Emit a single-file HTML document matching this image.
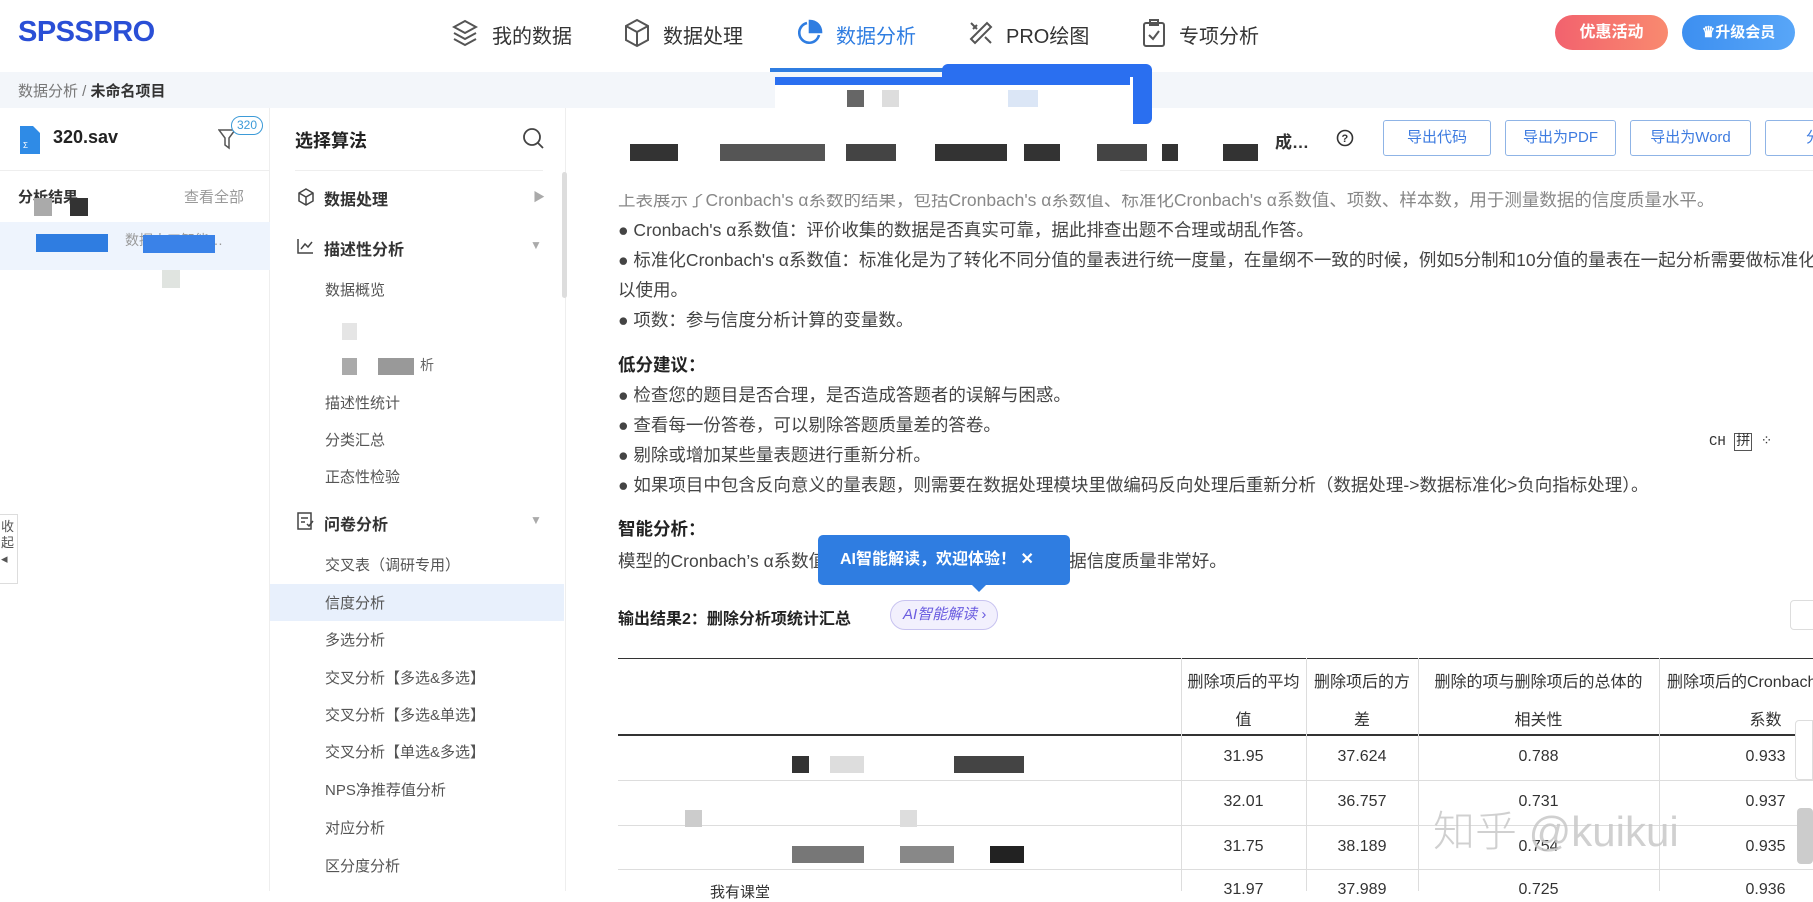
<!DOCTYPE html>
<html><head><meta charset="utf-8"><style>
*{margin:0;padding:0;box-sizing:border-box}
body{width:1813px;height:891px;overflow:hidden;background:#fff;font-family:"Liberation Sans","Noto Sans CJK SC",sans-serif;color:#333;position:relative}
.a{position:absolute;white-space:nowrap}
.nav{font-size:20px;color:#333}
.btn{position:absolute;border:1px solid #8fb4e6;border-radius:3px;color:#3d7be0;font-size:15px;text-align:center;line-height:34px;height:36px;top:120px}
.mi{position:absolute;left:325px;font-size:15px;color:#555}
.mh{position:absolute;left:324px;font-size:16px;color:#333;font-weight:bold}
.tx{position:absolute;left:618px;font-size:17.5px;color:#444;white-space:nowrap}
.blk{position:absolute;background:#333}
.td{position:absolute;font-size:16px;color:#333;text-align:center}
</style></head><body>
<div class="a" style="left:18px;top:16px;font-size:29px;font-weight:bold;color:#2a4fd6;letter-spacing:-0.5px">SPSSPRO</div>
<svg class="a" style="left:452px;top:19px" width="26" height="28" viewBox="0 0 26 28" fill="none" stroke="#555" stroke-width="2"><path d="M13 2 L24 8 L13 14 L2 8 Z"/><path d="M2 14 L13 20 L24 14"/><path d="M2 20 L13 26 L24 20"/></svg>
<div class="a nav" style="left:492px;top:20px">我的数据</div>
<svg class="a" style="left:624px;top:18px" width="26" height="30" viewBox="0 0 26 30" fill="none" stroke="#555" stroke-width="2"><path d="M13 2 L24 8 V22 L13 28 L2 22 V8 Z"/><path d="M2 8 L13 14 L24 8 M13 14 V28"/></svg>
<div class="a nav" style="left:663px;top:20px">数据处理</div>
<svg class="a" style="left:795px;top:19px" width="28" height="28" viewBox="0 0 28 28" fill="none" stroke="#2f7de1" stroke-width="2.6"><path d="M12 4 A10 10 0 1 0 24 16"/><path d="M15 2 V13 H26 A11 11 0 0 0 15 2 Z" fill="#2f7de1"/></svg>
<div class="a nav" style="left:836px;top:20px;color:#2f7de1">数据分析</div>
<svg class="a" style="left:967px;top:19px" width="28" height="28" viewBox="0 0 28 28" fill="none" stroke="#555" stroke-width="2"><path d="M4 20 L20 4 L24 8 L8 24 Z"/><path d="M4 4 L10 10 M18 18 L24 24 M6 10 L10 6"/></svg>
<div class="a nav" style="left:1006px;top:20px">PRO绘图</div>
<svg class="a" style="left:1142px;top:18px" width="24" height="30" viewBox="0 0 24 30" fill="none" stroke="#555" stroke-width="2"><rect x="2" y="5" width="20" height="23" rx="2"/><rect x="8" y="2" width="8" height="5"/><path d="M7 17 L11 21 L17 13"/></svg>
<div class="a nav" style="left:1179px;top:20px">专项分析</div>
<div class="a" style="left:1555px;top:15px;width:113px;height:35px;border-radius:18px;background:linear-gradient(90deg,#f2626e,#f98a6f);color:#fff;font-size:16px;font-weight:bold;text-align:center;line-height:35px">优惠活动</div>
<div class="a" style="left:1682px;top:15px;width:113px;height:35px;border-radius:18px;background:linear-gradient(90deg,#3d8ff0,#58a6f8);color:#fff;font-size:15px;font-weight:bold;text-align:center;line-height:35px">♛升级会员</div>
<div class="a" style="left:0;top:72px;width:1813px;height:36px;background:#f3f6fa"></div>
<div class="a" style="left:18px;top:80px;font-size:15px;color:#777">数据分析 / <b style="color:#333">未命名项目</b></div>
<div class="a" style="left:770px;top:68px;width:376px;height:4px;background:#2f7de1"></div>
<div class="a" style="left:942px;top:64px;width:210px;height:60px;background:#2a6ff0;border-radius:6px"></div>
<div class="a" style="left:775px;top:77px;width:358px;height:100px;background:#fff"></div>
<div class="a" style="left:775px;top:77px;width:355px;height:8px;background:#2a6ff0"></div>
<div class="blk" style="left:847px;top:90px;width:17px;height:17px;background:#666"></div>
<div class="a" style="left:882px;top:90px;width:17px;height:17px;background:#ddd"></div>
<div class="a" style="left:1008px;top:90px;width:30px;height:17px;background:#dbe6f6"></div>
<div class="a" style="left:0;top:108px;width:270px;height:783px;background:#fff;border-right:1px solid #eee"></div>
<svg class="a" style="left:20px;top:126px" width="20" height="28" viewBox="0 0 20 28"><path d="M0 0 H13 L20 7 V28 H0 Z" fill="#2f8be6"/><text x="3" y="22" font-size="8" fill="#fff" font-family="Liberation Sans">Σ</text></svg>
<div class="a" style="left:53px;top:127px;font-size:18px;font-weight:bold;color:#222">320.sav</div>
<svg class="a" style="left:218px;top:128px" width="18" height="22" viewBox="0 0 18 22" fill="none" stroke="#555" stroke-width="1.5"><path d="M1 2 H17 L11 10 V20 L7 17 V10 Z"/></svg>
<div class="a" style="left:231px;top:116px;width:32px;height:19px;border:1px solid #3d9bd8;border-radius:10px;font-size:12px;color:#3d9bd8;text-align:center;line-height:17px;background:#fff">320</div>
<div class="a" style="left:0;top:170px;width:270px;height:1px;background:#eee"></div>
<div class="a" style="left:18px;top:186px;font-size:15px;font-weight:bold;color:#333">分析结果</div>
<div class="a" style="left:184px;top:186px;font-size:15px;color:#999">查看全部</div>
<div class="a" style="left:34px;top:198px;width:18px;height:18px;background:#aaa"></div>
<div class="a" style="left:70px;top:198px;width:18px;height:18px;background:#333"></div>
<div class="a" style="left:0;top:222px;width:270px;height:48px;background:#eef4fd"></div>
<div class="a" style="left:36px;top:234px;width:72px;height:18px;background:#2f7de1"></div>
<div class="a" style="left:125px;top:230px;font-size:14px;color:#999">数据人工智能…</div>
<div class="a" style="left:143px;top:235px;width:72px;height:18px;background:#3a82e8"></div>
<div class="a" style="left:162px;top:270px;width:18px;height:18px;background:#e0e4e0"></div>
<div class="a" style="left:0;top:514px;width:18px;height:70px;background:#fff;border:1px solid #ddd;border-left:none;font-size:13px;color:#555;line-height:16px;padding:4px 0 0 1px;white-space:normal;width:18px">收起◂</div>
<div class="a" style="left:270px;top:108px;width:296px;height:783px;border-right:1px solid #eee"></div>
<div class="a" style="left:295px;top:127px;font-size:18px;font-weight:bold;color:#222">选择算法</div>
<svg class="a" style="left:522px;top:127px" width="22" height="22" viewBox="0 0 22 22" fill="none" stroke="#444" stroke-width="1.8"><circle cx="10" cy="10" r="8"/><path d="M16 16 L21 21"/></svg>
<div class="a" style="left:295px;top:170px;width:248px;height:1px;background:#eee"></div>
<div class="a" style="left:562px;top:172px;width:5px;height:126px;background:#ddd;border-radius:3px"></div>
<svg class="a" style="left:298px;top:188px" width="16" height="18" viewBox="0 0 16 18" fill="none" stroke="#444" stroke-width="1.5"><path d="M8 1 L15 5 V13 L8 17 L1 13 V5 Z M1 5 L8 9 L15 5 M8 9 V17"/></svg>
<div class="mh" style="top:186px">数据处理</div><div class="a" style="left:533px;top:188px;color:#aaa;font-size:12px">▶</div>
<svg class="a" style="left:297px;top:238px" width="17" height="16" viewBox="0 0 17 16" fill="none" stroke="#444" stroke-width="1.5"><path d="M1 1 V15 H16 M4 11 L8 6 L11 9 L15 4"/></svg>
<div class="mh" style="top:236px">描述性分析</div><div class="a" style="left:530px;top:238px;color:#aaa;font-size:12px">▼</div>
<div class="mi" style="top:279px">数据概览</div>
<div class="a" style="left:342px;top:323px;width:15px;height:17px;background:#e5e5e5"></div>
<div class="a" style="left:342px;top:358px;width:15px;height:17px;background:#aaa"></div>
<div class="a" style="left:378px;top:358px;width:36px;height:17px;background:#999"></div>
<div class="a" style="left:420px;top:355px;font-size:14px;color:#666">析</div>
<div class="mi" style="top:392px">描述性统计</div>
<div class="mi" style="top:429px">分类汇总</div>
<div class="mi" style="top:466px">正态性检验</div>
<svg class="a" style="left:297px;top:512px" width="17" height="18" viewBox="0 0 17 18" fill="none" stroke="#444" stroke-width="1.5"><rect x="1" y="1" width="13" height="16"/><path d="M4 6 H11 M4 10 H8 M10 12 L12 14 L16 9"/></svg>
<div class="mh" style="top:511px">问卷分析</div><div class="a" style="left:530px;top:513px;color:#aaa;font-size:12px">▼</div>
<div class="mi" style="top:554px">交叉表（调研专用）</div>
<div class="a" style="left:270px;top:584px;width:294px;height:37px;background:#e8f0fc"></div>
<div class="mi" style="top:592px">信度分析</div>
<div class="mi" style="top:629px">多选分析</div>
<div class="mi" style="top:667px">交叉分析【多选&amp;多选】</div>
<div class="mi" style="top:704px">交叉分析【多选&amp;单选】</div>
<div class="mi" style="top:741px">交叉分析【单选&amp;多选】</div>
<div class="mi" style="top:779px">NPS净推荐值分析</div>
<div class="mi" style="top:817px">对应分析</div>
<div class="mi" style="top:855px">区分度分析</div>
<div class="blk" style="left:630px;top:144px;width:48px;height:17px"></div>
<div class="blk" style="left:720px;top:144px;width:105px;height:17px;background:#555"></div>
<div class="blk" style="left:846px;top:144px;width:50px;height:17px;background:#444"></div>
<div class="blk" style="left:935px;top:144px;width:72px;height:17px"></div>
<div class="blk" style="left:1024px;top:144px;width:36px;height:17px"></div>
<div class="blk" style="left:1097px;top:144px;width:50px;height:17px;background:#444"></div>
<div class="blk" style="left:1162px;top:144px;width:16px;height:17px"></div>
<div class="blk" style="left:1223px;top:144px;width:35px;height:17px"></div>
<div class="a" style="left:1275px;top:128px;font-size:17px;font-weight:bold;color:#333">成…</div>
<svg class="a" style="left:1336px;top:129px" width="18" height="18" viewBox="0 0 18 18" fill="none" stroke="#333" stroke-width="1.6"><circle cx="9" cy="9" r="7.5"/><text x="5.5" y="13" font-size="11" fill="#333" stroke="none" font-family="Liberation Sans" font-weight="bold">?</text></svg>
<div class="btn" style="left:1383px;width:108px">导出代码</div>
<div class="btn" style="left:1505px;width:111px">导出为PDF</div>
<div class="btn" style="left:1630px;width:121px">导出为Word</div>
<div class="btn" style="left:1765px;width:80px;text-align:left;padding-left:40px">分</div>
<div class="a" style="left:1120px;top:170px;width:693px;height:1px;background:#eee"></div>
<div class="tx" style="top:187px;color:#888">上表展示了Cronbach's α系数的结果，包括Cronbach's α系数值、标准化Cronbach's α系数值、项数、样本数，用于测量数据的信度质量水平。</div>
<div class="a" style="left:618px;top:183px;width:560px;height:11px;background:#fff"></div>
<div class="tx" style="top:217px">● Cronbach's α系数值：评价收集的数据是否真实可靠，据此排查出题不合理或胡乱作答。</div>
<div class="tx" style="top:247px">● 标准化Cronbach's α系数值：标准化是为了转化不同分值的量表进行统一度量，在量纲不一致的时候，例如5分制和10分值的量表在一起分析需要做标准化</div>
<div class="tx" style="top:277px">以使用。</div>
<div class="tx" style="top:307px">● 项数：参与信度分析计算的变量数。</div>
<div class="tx" style="top:352px;font-weight:bold;color:#222">低分建议：</div>
<div class="tx" style="top:382px">● 检查您的题目是否合理，是否造成答题者的误解与困惑。</div>
<div class="tx" style="top:412px">● 查看每一份答卷，可以剔除答题质量差的答卷。</div>
<div class="tx" style="top:442px">● 剔除或增加某些量表题进行重新分析。</div>
<div class="tx" style="top:472px">● 如果项目中包含反向意义的量表题，则需要在数据处理模块里做编码反向处理后重新分析（数据处理->数据标准化>负向指标处理）。</div>
<div class="tx" style="top:516px;font-weight:bold;color:#222">智能分析：</div>
<div class="tx" style="top:548px">模型的Cronbach’s α系数值为0.936，大于0.9，说明研究数据信度质量非常好。</div>
<div class="a" style="left:818px;top:535px;width:252px;height:50px;background:#2f7de1;border-radius:5px;color:#fff;font-size:16px;font-weight:bold;line-height:50px;padding-left:22px">AI智能解读，欢迎体验！ ✕</div>
<div class="a" style="left:970px;top:583px;width:0;height:0;border-left:9px solid transparent;border-right:9px solid transparent;border-top:9px solid #2f7de1"></div>
<div class="a" style="left:1709px;top:430px;font-size:14px;color:#333;font-family:'Liberation Mono',monospace">CH <span style="border:1px solid #555;padding:0 1px">拼</span> ⁘</div>
<div class="tx" style="top:605px;font-weight:bold;color:#222;font-size:16px">输出结果2：删除分析项统计汇总</div>
<div class="a" style="left:890px;top:600px;width:108px;height:30px;border:1px solid #c8c3f0;border-radius:15px;background:#f2f0fd;color:#6a5ce0;font-size:15px;font-style:italic;line-height:28px;padding-left:12px">AI智能解读 <span style="font-style:normal">›</span></div>
<div class="a" style="left:1790px;top:600px;width:30px;height:30px;border:1px solid #ddd;border-radius:4px"></div>
<div class="a" style="left:618px;top:658px;width:1200px;height:1px;background:#333"></div>
<div class="a" style="left:618px;top:734px;width:1200px;height:2px;background:#333"></div>
<div class="a" style="left:618px;top:780px;width:1200px;height:1px;background:#ddd"></div>
<div class="a" style="left:618px;top:825px;width:1200px;height:1px;background:#ddd"></div>
<div class="a" style="left:618px;top:869px;width:1200px;height:1px;background:#ddd"></div>
<div class="a" style="left:1181px;top:658px;width:1px;height:233px;background:#ddd"></div>
<div class="a" style="left:1306px;top:658px;width:1px;height:233px;background:#ddd"></div>
<div class="a" style="left:1418px;top:658px;width:1px;height:233px;background:#ddd"></div>
<div class="a" style="left:1659px;top:658px;width:1px;height:233px;background:#ddd"></div>
<div class="td" style="left:1181px;top:668px;width:125px">删除项后的平均</div>
<div class="td" style="left:1181px;top:706px;width:125px">值</div>
<div class="td" style="left:1306px;top:668px;width:112px">删除项后的方</div>
<div class="td" style="left:1306px;top:706px;width:112px">差</div>
<div class="td" style="left:1418px;top:668px;width:241px">删除的项与删除项后的总体的</div>
<div class="td" style="left:1418px;top:706px;width:241px">相关性</div>
<div class="td" style="left:1659px;top:668px;width:200px;text-align:left;padding-left:8px">删除项后的Cronbach</div>
<div class="td" style="left:1659px;top:706px;width:213px">系数</div>
<div class="td" style="left:1181px;top:748px;width:125px">31.95</div><div class="td" style="left:1306px;top:748px;width:112px">37.624</div><div class="td" style="left:1418px;top:748px;width:241px">0.788</div><div class="td" style="left:1659px;top:748px;width:213px">0.933</div>
<div class="td" style="left:1181px;top:793px;width:125px">32.01</div><div class="td" style="left:1306px;top:793px;width:112px">36.757</div><div class="td" style="left:1418px;top:793px;width:241px">0.731</div><div class="td" style="left:1659px;top:793px;width:213px">0.937</div>
<div class="td" style="left:1181px;top:838px;width:125px">31.75</div><div class="td" style="left:1306px;top:838px;width:112px">38.189</div><div class="td" style="left:1418px;top:838px;width:241px">0.754</div><div class="td" style="left:1659px;top:838px;width:213px">0.935</div>
<div class="td" style="left:1181px;top:881px;width:125px">31.97</div><div class="td" style="left:1306px;top:881px;width:112px">37.989</div><div class="td" style="left:1418px;top:881px;width:241px">0.725</div><div class="td" style="left:1659px;top:881px;width:213px">0.936</div>
<div class="a" style="left:710px;top:881px;font-size:15px;color:#333">我有课堂</div>
<div class="blk" style="left:792px;top:756px;width:17px;height:17px"></div>
<div class="a" style="left:830px;top:756px;width:34px;height:17px;background:#ddd"></div>
<div class="blk" style="left:954px;top:756px;width:70px;height:17px;background:#444"></div>
<div class="a" style="left:685px;top:810px;width:17px;height:17px;background:#ccc"></div>
<div class="a" style="left:900px;top:810px;width:17px;height:17px;background:#ddd"></div>
<div class="blk" style="left:792px;top:846px;width:72px;height:17px;background:#777"></div>
<div class="blk" style="left:900px;top:846px;width:54px;height:17px;background:#888"></div>
<div class="blk" style="left:990px;top:846px;width:34px;height:17px;background:#222"></div>
<div class="a" style="left:1433px;top:798px;font-size:42px;color:rgba(200,200,200,0.85);font-weight:300">知乎 @kuikui</div>
<div class="a" style="left:1795px;top:720px;width:18px;height:60px;border:1px solid #ddd;border-radius:4px 0 0 4px;background:#fff"></div>
<div class="a" style="left:1797px;top:808px;width:16px;height:56px;background:#ccc;border-radius:4px"></div>
</body></html>
